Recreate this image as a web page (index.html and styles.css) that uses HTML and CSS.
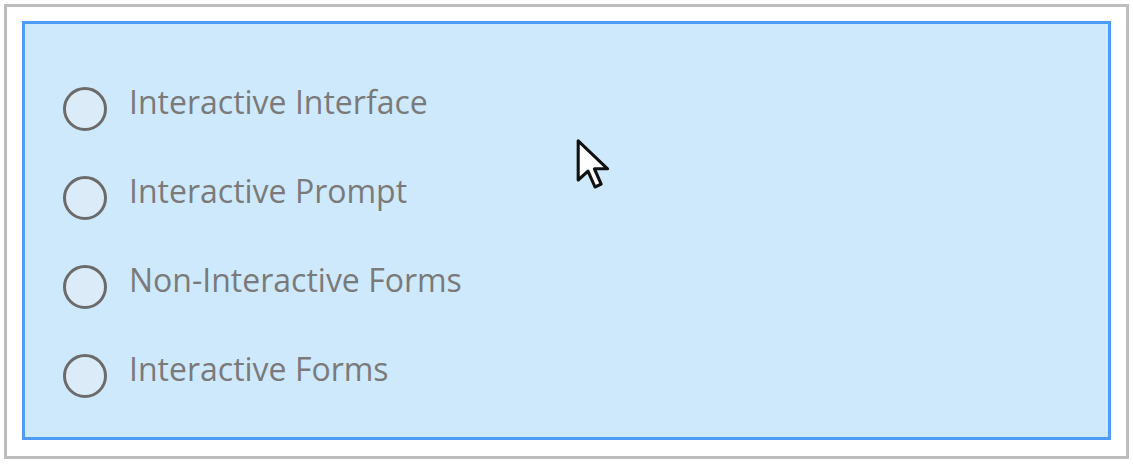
FILE: index.html
```html
<!DOCTYPE html>
<html>
<head>
	<title>Radio options</title>
	<link rel="stylesheet" href="styles.css">
</head>
<body>
	<div class="frame">
	    <div class="options">
	        <ul class="choices">
	            <li><label class="choice"><span class="radio"></span><span class="text">Interactive Interface</span></label></li>
	            <li><label class="choice"><span class="radio"></span><span class="text">Interactive Prompt</span></label></li>
	            <li><label class="choice"><span class="radio"></span><span class="text">Non-Interactive Forms</span></label></li>
	            <li><label class="choice"><span class="radio"></span><span class="text">Interactive Forms</span></label></li>
	        </ul>
	        <svg class="cursor" width="40" height="56" viewBox="0 0 14 20">
	            <path d="M1 1 L1 15 L4.5 11.8 L7 17.5 L9.2 16.5 L6.8 11 L11.5 11 Z" fill="#fff" stroke="#111" stroke-width="1.1" stroke-linejoin="round"/>
	        </svg>
	    </div>
	</div>
</body>
</html>
```

FILE: styles.css
```css
* {
	box-sizing: border-box;
}

body {
    margin: 0;
    background-color: #fff;
    font-family: "Open Sans", "Liberation Sans", sans-serif;
}

ul {
	margin: 0;
	padding: 0;
	list-style: none outside none;
}

.frame {
    margin: 4px;
    width: 1125px;
    height: 455px;
    border: 3px solid #bdbdbd;
    padding: 14px 15px 16px 15px;
}

.options {
    position: relative;
    height: 100%;
    background: #cfe9fc;
    border: 3px solid #4e9cf6;
    padding: 40px 38px 0 38px;
}

.choice {
    display: flex;
    align-items: center;
    height: 89px;
}

.radio {
    flex: none;
    width: 44px;
    height: 44px;
    border: 3px solid #6b6b6b;
    border-radius: 50%;
    background: #dbecf8;
    margin-right: 22px;
}

.text {
    font-size: 32px;
    color: #7a7a7a;
    margin-bottom: 15px;
    letter-spacing: 0;
}

.cursor {
    position: absolute;
    left: 550px;
    top: 114px;
}
```
